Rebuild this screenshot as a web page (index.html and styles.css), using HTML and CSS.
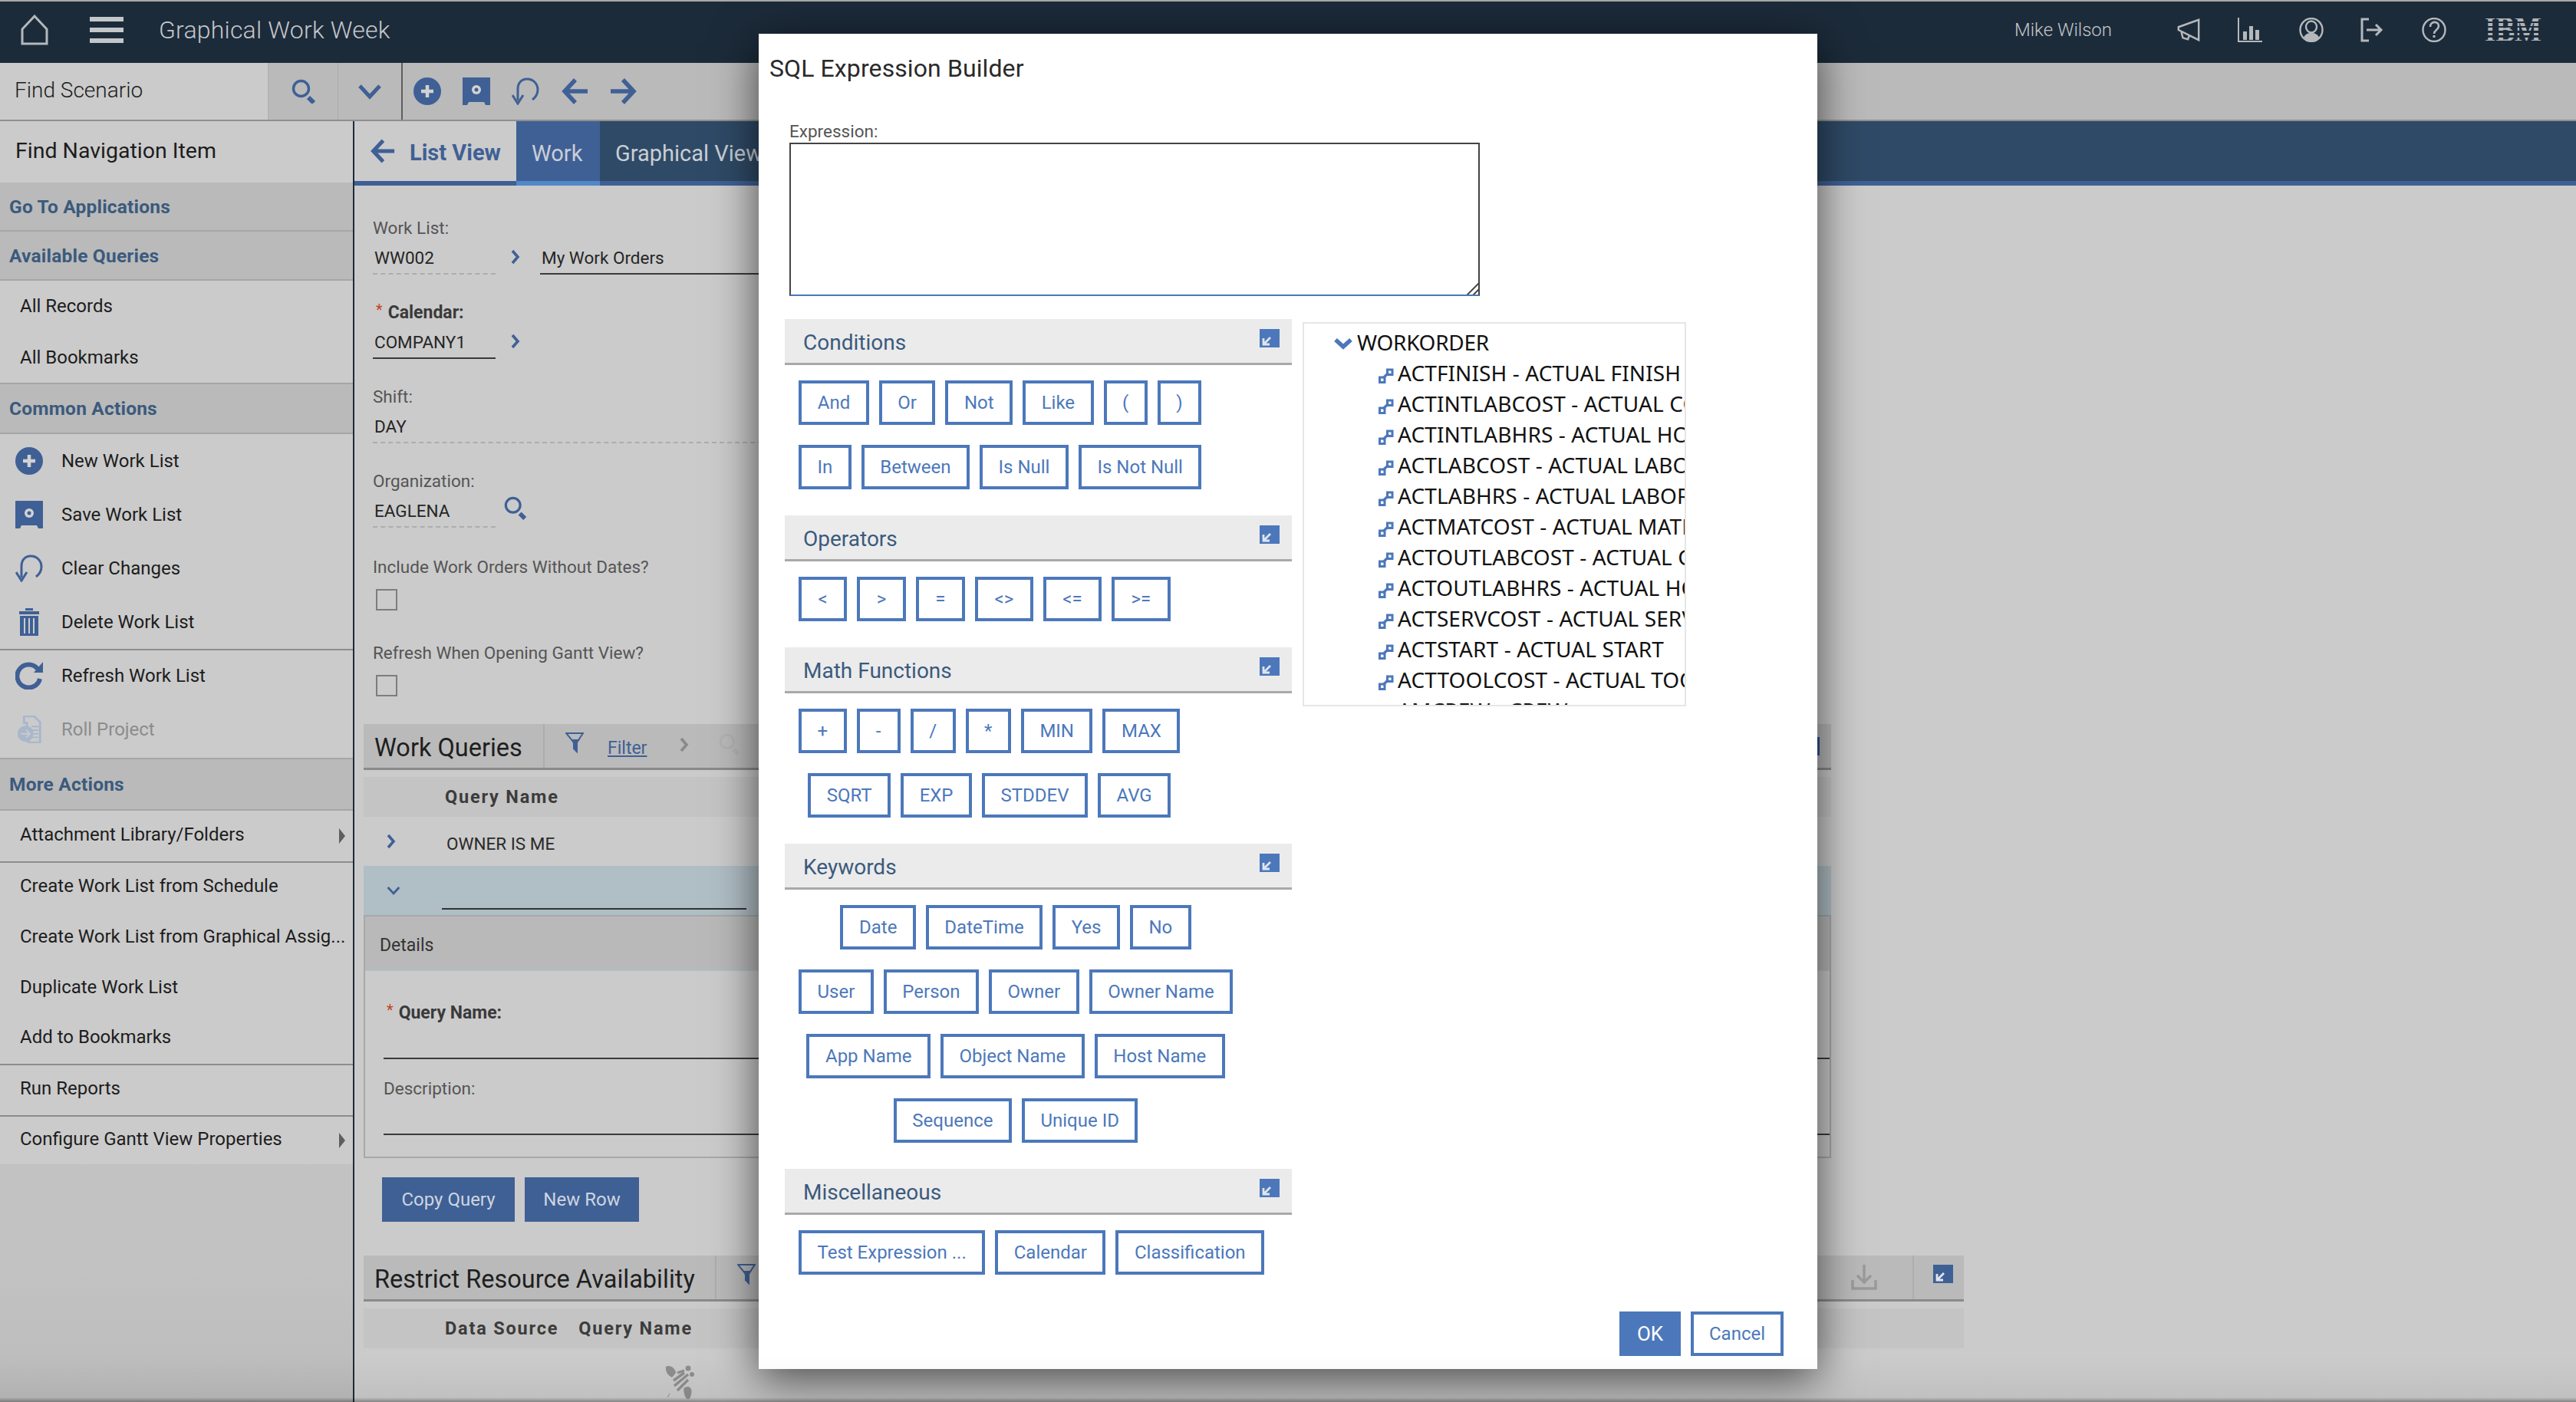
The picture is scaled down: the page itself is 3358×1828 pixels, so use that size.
FILE: index.html
```html
<!DOCTYPE html>
<html lang="en">
<head>
<meta charset="utf-8">
<title>SQL Expression Builder</title>
<link rel="stylesheet" href="styles.css">
</head>
<body>
<svg class="defs" width="0" height="0">
  <symbol id="i-search" viewBox="0 0 32 32"><circle cx="12.5" cy="12.5" r="10" fill="none" stroke="currentColor" stroke-width="3.4"/><path d="M22 24l7 7" stroke="currentColor" stroke-width="6" fill="none"/></symbol>
  <symbol id="i-down" viewBox="0 0 32 20"><path d="M3 3l13 14L29 3" fill="none" stroke="currentColor" stroke-width="5"/></symbol>
  <symbol id="i-treedown" viewBox="0 0 24 16"><path d="M2 3l10 9L22 3" fill="none" stroke="currentColor" stroke-width="5.5"/></symbol>
  <symbol id="i-right" viewBox="0 0 12 20"><path d="M2 2l7 8-7 8" fill="none" stroke="currentColor" stroke-width="3.6"/></symbol>
  <symbol id="i-plus" viewBox="0 0 36 36"><circle cx="18" cy="18" r="18" fill="currentColor"/><path d="M18 10v16M10 18h16" stroke="#d2d2d2" stroke-width="4.5"/></symbol>
  <symbol id="i-save" viewBox="0 0 36 36"><path d="M0 0h36v36h-6l-2-4H8l-2 4H0z" fill="currentColor"/><circle cx="18" cy="16" r="6" fill="#d2d2d2"/><circle cx="18" cy="16" r="2.5" fill="currentColor"/></symbol>
  <symbol id="i-undo" viewBox="0 0 36 36"><path d="M8 30V15C8 7 13 2 20 2c8 0 14 6 14 14 0 6-3 10-7 13" fill="none" stroke="currentColor" stroke-width="3"/><path d="M1 23l7 11 7-11" fill="none" stroke="currentColor" stroke-width="3"/></symbol>
  <symbol id="i-left" viewBox="0 0 36 36"><path d="M35 18H6M19 3L5 18l14 15" fill="none" stroke="currentColor" stroke-width="5.5"/></symbol>
  <symbol id="i-fwd" viewBox="0 0 36 36"><path d="M1 18h29M17 3l14 15-14 15" fill="none" stroke="currentColor" stroke-width="5.5"/></symbol>
  <symbol id="i-trash" viewBox="0 0 28 36"><path d="M9 0h10v3H9zM1 4h26v4H1zM2 10h24v26H2z" fill="currentColor"/><path d="M8 13v20M14 13v20M20 13v20" stroke="#cbcbcb" stroke-width="2"/></symbol>
  <symbol id="i-refresh" viewBox="0 0 36 36"><path d="M29 9A15 15 0 1 0 32 22" fill="none" stroke="currentColor" stroke-width="6"/><path d="M24 14h12V0z" fill="currentColor"/></symbol>
  <symbol id="i-doc" viewBox="0 0 34 38"><path d="M10 1h14l8 8v28H16v-2h-2V10h-4z" fill="none" stroke="currentColor" stroke-width="3"/><path d="M20 15h10M20 20h10M20 25h10M20 30h10" stroke="currentColor" stroke-width="2"/><circle cx="12" cy="25" r="11" fill="currentColor"/><path d="M6 25h11M13 20l5 5-5 5" fill="none" stroke="#cbcbcb" stroke-width="2"/></symbol>
  <symbol id="i-funnel" viewBox="0 0 24 26"><path d="M1 1h22L15 13v12l-4-4V13z" fill="none" stroke="currentColor" stroke-width="2"/><path d="M9 9h10l-4 5v11l-4-4z" fill="currentColor"/></symbol>
  <symbol id="i-collapse" viewBox="0 0 26 24"><path d="M0 0h26v24H0z" fill="currentColor"/><path d="M14 11l-8 8M5 12v8h8" fill="none" stroke="#dfe5ee" stroke-width="2.8"/></symbol>
  <symbol id="i-link" viewBox="0 0 20 20"><path d="M1.5 12h6.500v6.500H1.500zM11.500 2h6.500v6.500h-6.500z" fill="none" stroke="currentColor" stroke-width="3"/><path d="M6 13l7-7" stroke="currentColor" stroke-width="3.200"/></symbol>
  <symbol id="i-home" viewBox="0 0 38 40"><path d="M19 2L3 19v19h32V19z" fill="none" stroke="currentColor" stroke-width="3"/></symbol>
  <symbol id="i-mega" viewBox="0 0 32 34"><path d="M30 3v28L2 17 2 13z" fill="none" stroke="currentColor" stroke-width="2.6"/><path d="M6 20l2 8 7 2 2-5" fill="none" stroke="currentColor" stroke-width="2.6"/></symbol>
  <symbol id="i-chart" viewBox="0 0 32 32"><path d="M1 0v31h31" fill="none" stroke="currentColor" stroke-width="2"/><path d="M7 18h5v11H7zM15 11h5v18h-5zM23 16h5v13h-5z" fill="currentColor"/></symbol>
  <symbol id="i-user" viewBox="0 0 32 32"><ellipse cx="16" cy="16" rx="14.5" ry="15" fill="none" stroke="currentColor" stroke-width="2.4"/><ellipse cx="16" cy="12" rx="7" ry="7.5" fill="none" stroke="currentColor" stroke-width="2.4"/><path d="M6 26c2-5 6-6 10-6s8 1 10 6c-6 7-14 7-20 0z" fill="currentColor"/></symbol>
  <symbol id="i-logout" viewBox="0 0 32 32"><path d="M11 2H2v28h9" fill="none" stroke="currentColor" stroke-width="3"/><path d="M8 16h18M20 9l7 7-7 7" fill="none" stroke="currentColor" stroke-width="3"/></symbol>
  <symbol id="i-help" viewBox="0 0 32 32"><ellipse cx="16" cy="16" rx="14.5" ry="15" fill="none" stroke="currentColor" stroke-width="2.4"/><path d="M11 12c0-8 11-8 11-1 0 5-6 5-6 10" fill="none" stroke="currentColor" stroke-width="2.6"/><path d="M14.5 23h3v3h-3z" fill="currentColor"/></symbol>
  <symbol id="i-download" viewBox="0 0 34 34"><path d="M17 0v23M8 14l9 9 9-9M2 20v11h30V20" fill="none" stroke="currentColor" stroke-width="3.4"/></symbol>
  <symbol id="i-bee" viewBox="0 0 40 44"><path d="M2 2c6-3 12 2 13 8l-5 6C5 14 1 8 2 2z" fill="currentColor"/><circle cx="31" cy="4" r="3.5" fill="currentColor"/><circle cx="36" cy="12" r="3" fill="currentColor"/><path d="M17 10l9-3M12 20l14-10M13 27l18-15M17 33l14-14" stroke="currentColor" stroke-width="3.4" fill="none"/><path d="M26 30c5-3 9-1 9 4 0 5-2 10-4 10-3 0-6-8-5-14zM4 42l3-5" fill="currentColor" stroke="currentColor"/></symbol>
</svg>

<header class="topbar">
  <svg class="ic ic-home"><use href="#i-home"/></svg>
  <span class="burger"></span>
  <span class="app-title">Graphical Work Week</span>
  <span class="user-name">Mike Wilson</span>
  <svg class="ic top-ic"><use href="#i-mega"/></svg>
  <svg class="ic top-ic"><use href="#i-chart"/></svg>
  <svg class="ic top-ic"><use href="#i-user"/></svg>
  <svg class="ic top-ic"><use href="#i-logout"/></svg>
  <svg class="ic top-ic"><use href="#i-help"/></svg>
  <span class="ibm">IBM</span>
</header>

<div class="toolbar">
  <div class="find-scenario">Find Scenario</div>
  <div class="tool-cell cell-search"><svg class="ic ic-33"><use href="#i-search"/></svg></div>
  <div class="tool-cell cell-down"><svg class="ic ic-down"><use href="#i-down"/></svg></div>
  <div class="tool-icons">
    <svg class="ic ic-36"><use href="#i-plus"/></svg>
    <svg class="ic ic-36"><use href="#i-save"/></svg>
    <svg class="ic ic-36"><use href="#i-undo"/></svg>
    <svg class="ic ic-36"><use href="#i-left"/></svg>
    <svg class="ic ic-36"><use href="#i-fwd"/></svg>
  </div>
</div>

<div class="main">
  <nav class="sidebar">
    <div class="nav-find">Find Navigation Item</div>
    <div class="nav-head h64 no-top">Go To Applications</div>
    <div class="nav-head h64 no-top">Available Queries</div>
    <div class="nav-item h66">All Records</div>
    <div class="nav-item h67">All Bookmarks</div>
    <div class="nav-head h67">Common Actions</div>
    <div class="nav-item act"><svg class="ic ic-36"><use href="#i-plus"/></svg>New Work List</div>
    <div class="nav-item act"><svg class="ic ic-36"><use href="#i-save"/></svg>Save Work List</div>
    <div class="nav-item act"><svg class="ic ic-36"><use href="#i-undo"/></svg>Clear Changes</div>
    <div class="nav-item act rule"><svg class="ic ic-36"><use href="#i-trash"/></svg>Delete Work List</div>
    <div class="nav-item act h68 up"><svg class="ic ic-36"><use href="#i-refresh"/></svg>Refresh Work List</div>
    <div class="nav-item act off up"><svg class="ic ic-36"><use href="#i-doc"/></svg>Roll Project</div>
    <div class="nav-head h69">More Actions</div>
    <div class="nav-item h68 rule sub up">Attachment Library/Folders</div>
    <div class="nav-item h65 up">Create Work List from Schedule</div>
    <div class="nav-item h66 up">Create Work List from Graphical Assig...</div>
    <div class="nav-item h66 up">Duplicate Work List</div>
    <div class="nav-item h67 rule up">Add to Bookmarks</div>
    <div class="nav-item h67 rule up">Run Reports</div>
    <div class="nav-item h62 sub up">Configure Gantt View Properties</div>
  </nav>

  <section class="content">
    <div class="tabs">
      <div class="tab-back"><svg class="ic ic-back"><use href="#i-left"/></svg><span>List View</span></div>
      <div class="tab tab-on">Work</div>
      <div class="tab">Graphical View</div>
    </div>

    <div class="form">
      <div class="field">
        <div class="lbl">Work List:</div>
        <div class="val-row">
          <div class="val dashed">WW002</div>
          <svg class="ic ic-chev"><use href="#i-right"/></svg>
          <div class="val solid wide">My Work Orders</div>
        </div>
      </div>
      <div class="field">
        <div class="lbl req"><i>*</i>Calendar:</div>
        <div class="val-row">
          <div class="val solid">COMPANY1</div>
          <svg class="ic ic-chev"><use href="#i-right"/></svg>
        </div>
      </div>
      <div class="field">
        <div class="lbl">Shift:</div>
        <div class="val-row"><div class="val dashed full">DAY</div></div>
      </div>
      <div class="field f-org">
        <div class="lbl">Organization:</div>
        <div class="val-row">
          <div class="val dashed">EAGLENA</div>
          <svg class="ic ic-org"><use href="#i-search"/></svg>
        </div>
      </div>
      <div class="field f-check">
        <div class="lbl">Include Work Orders Without Dates?</div>
        <span class="check"></span>
      </div>
      <div class="field f-check">
        <div class="lbl">Refresh When Opening Gantt View?</div>
        <span class="check"></span>
      </div>
    </div>

    <div class="panel wq">
      <div class="panel-head">
        <div class="panel-title">Work Queries</div>
        <div class="panel-tools">
          <svg class="ic ic-funnel"><use href="#i-funnel"/></svg>
          <span class="filter-link">Filter</span>
          <svg class="ic ic-chev faded"><use href="#i-right"/></svg>
          <svg class="ic ic-search-faded"><use href="#i-search"/></svg>
          <svg class="ic ic-collapse"><use href="#i-collapse"/></svg>
        </div>
      </div>
      <div class="col-head"><span class="col c1">Query Name</span></div>
      <div class="row"><svg class="ic ic-chev r-chev"><use href="#i-right"/></svg><span class="cell">OWNER IS ME</span></div>
      <div class="row row-sel"><svg class="ic ic-sel"><use href="#i-down"/></svg><span class="sel-input"></span></div>
      <div class="details">
        <div class="details-head">Details</div>
        <div class="details-body">
          <div class="lbl req"><i>*</i>Query Name:</div>
          <div class="d-line"></div>
          <div class="lbl d-lbl">Description:</div>
          <div class="d-line d-line2"></div>
        </div>
      </div>
      <div class="actions">
        <button class="btn-solid">Copy Query</button>
        <button class="btn-solid">New Row</button>
      </div>
    </div>

    <div class="panel rr">
      <div class="panel-head">
        <div class="panel-title rr-title">Restrict Resource Availability</div>
        <div class="panel-tools rr-tools">
          <svg class="ic ic-funnel"><use href="#i-funnel"/></svg>
          <svg class="ic ic-download"><use href="#i-download"/></svg>
          <span class="rr-last"><svg class="ic ic-collapse2"><use href="#i-collapse"/></svg></span>
        </div>
      </div>
      <div class="col-head"><span class="col c1">Data Source</span><span class="col c2">Query Name</span></div>
      <svg class="ic ic-bee"><use href="#i-bee"/></svg>
    </div>
  </section>
</div>

<div class="modal">
  <h1 class="m-title">SQL Expression Builder</h1>
  <label class="m-label">Expression:</label>
  <textarea class="m-text"></textarea>
  <div class="m-body">
    <div class="m-left">
      <div class="g-head">Conditions<svg class="ic g-ic"><use href="#i-collapse"/></svg></div>
      <div class="g-btns">
        <div class="g-row"><button class="b">And</button><button class="b">Or</button><button class="b">Not</button><button class="b">Like</button><button class="b b-s">(</button><button class="b b-s">)</button></div>
        <div class="g-row"><button class="b">In</button><button class="b">Between</button><button class="b">Is Null</button><button class="b">Is Not Null</button></div>
      </div>
      <div class="g-head">Operators<svg class="ic g-ic"><use href="#i-collapse"/></svg></div>
      <div class="g-btns">
        <div class="g-row"><button class="b b-op">&lt;</button><button class="b b-op">&gt;</button><button class="b b-op">=</button><button class="b b-op">&lt;&gt;</button><button class="b b-op">&lt;=</button><button class="b b-op">&gt;=</button></div>
      </div>
      <div class="g-head">Math Functions<svg class="ic g-ic"><use href="#i-collapse"/></svg></div>
      <div class="g-btns">
        <div class="g-row"><button class="b">+</button><button class="b">-</button><button class="b">/</button><button class="b">*</button><button class="b">MIN</button><button class="b">MAX</button></div>
        <div class="g-row"><button class="b">SQRT</button><button class="b">EXP</button><button class="b">STDDEV</button><button class="b">AVG</button></div>
      </div>
      <div class="g-head">Keywords<svg class="ic g-ic"><use href="#i-collapse"/></svg></div>
      <div class="g-btns">
        <div class="g-row"><button class="b">Date</button><button class="b">DateTime</button><button class="b">Yes</button><button class="b">No</button></div>
        <div class="g-row"><button class="b">User</button><button class="b">Person</button><button class="b">Owner</button><button class="b">Owner Name</button></div>
        <div class="g-row"><button class="b">App Name</button><button class="b">Object Name</button><button class="b">Host Name</button></div>
        <div class="g-row"><button class="b">Sequence</button><button class="b">Unique ID</button></div>
      </div>
      <div class="g-head">Miscellaneous<svg class="ic g-ic"><use href="#i-collapse"/></svg></div>
      <div class="g-btns">
        <div class="g-row"><button class="b">Test Expression ...</button><button class="b">Calendar</button><button class="b">Classification</button></div>
      </div>
    </div>
    <div class="tree">
      <div class="t-root"><svg class="ic t-chev"><use href="#i-treedown"/></svg>WORKORDER</div>
      <div class="t-item"><svg class="ic t-link"><use href="#i-link"/></svg>ACTFINISH - ACTUAL FINISH</div>
      <div class="t-item"><svg class="ic t-link"><use href="#i-link"/></svg>ACTINTLABCOST - ACTUAL COST</div>
      <div class="t-item"><svg class="ic t-link"><use href="#i-link"/></svg>ACTINTLABHRS - ACTUAL HOURS</div>
      <div class="t-item"><svg class="ic t-link"><use href="#i-link"/></svg>ACTLABCOST - ACTUAL LABOR COST</div>
      <div class="t-item"><svg class="ic t-link"><use href="#i-link"/></svg>ACTLABHRS - ACTUAL LABOR HOURS</div>
      <div class="t-item"><svg class="ic t-link"><use href="#i-link"/></svg>ACTMATCOST - ACTUAL MATERIAL</div>
      <div class="t-item"><svg class="ic t-link"><use href="#i-link"/></svg>ACTOUTLABCOST - ACTUAL COST</div>
      <div class="t-item"><svg class="ic t-link"><use href="#i-link"/></svg>ACTOUTLABHRS - ACTUAL HOURS</div>
      <div class="t-item"><svg class="ic t-link"><use href="#i-link"/></svg>ACTSERVCOST - ACTUAL SERVICE</div>
      <div class="t-item"><svg class="ic t-link"><use href="#i-link"/></svg>ACTSTART - ACTUAL START</div>
      <div class="t-item"><svg class="ic t-link"><use href="#i-link"/></svg>ACTTOOLCOST - ACTUAL TOOL</div>
      <div class="t-item t-plain">AMCREW - CREW</div>
    </div>
  </div>
  <div class="m-foot">
    <button class="b-ok">OK</button>
    <button class="b b-cancel">Cancel</button>
  </div>
</div>
<div class="vignette"></div>
</body>
</html>
```
FILE: styles.css
```css
* { box-sizing: border-box; }
html, body { margin: 0; padding: 0; }
body {
  width: 3358px; height: 1828px; overflow: hidden; position: relative;
  background: #cbcbcb; color: #262626;
  font-family: Roboto, "Liberation Sans", sans-serif; font-size: 24px;
}
.defs { position: absolute; }
.ic { display: block; flex: none; color: #3f6095; }

.topbar {
  height: 82px; background: #1c2b3a; border-top: 2px solid #a9a9a9; padding-bottom: 6px;
  display: flex; align-items: center; color: #c4c7ca;
}
.topbar .ic { color: #b4b8bc; }
.ic-home { width: 38px; height: 40px; margin-left: 26px; }
.burger {
  width: 44px; height: 34px; margin-left: 53px;
  border-top: 6px solid #c4c7ca; border-bottom: 6px solid #c4c7ca; position: relative;
}
.burger::after { content: ""; position: absolute; left: 0; right: 0; top: 8px; height: 6px; background: #c4c7ca; }
.app-title { margin-left: 46px; font-size: 32px; font-weight: 300; letter-spacing: .2px; }
.user-name { margin-left: auto; font-size: 24px; font-weight: 300; }
.top-ic { width: 32px; height: 32px; margin-left: 48px; }
.user-name + .top-ic { margin-left: 84px; }
.ibm {
  position: relative; margin: 0 45px 0 50px; font: 700 37px/34px "Liberation Serif", serif;
  color: #b0b4b8; transform: scaleY(1.25);
}
.ibm::after {
  content: ""; position: absolute; inset: 0;
  background: repeating-linear-gradient(#0000 0 3px, #1c2b3a 3px 5px);
}

.toolbar {
  height: 76px; display: flex; background: #bababa; border-bottom: 2px solid #8f8f8f;
}
.find-scenario {
  width: 351px; background: #cbcbcb; border-right: 2px solid #b4b4b4;
  padding-left: 19px; font-size: 28px; line-height: 72px; font-weight: 300; color: #1d1d1d;
}
.tool-cell { display: flex; align-items: center; justify-content: center; height: 74px; }
.cell-search { width: 90px; border-right: 1px solid #acacac; }
.cell-down { width: 84px; border-right: 2px solid #5e5e5e; }
.ic-33 { width: 34px; height: 32px; }
.ic-down { width: 32px; height: 22px; }
.ic-36 { width: 36px; height: 36px; }
.tool-icons { display: flex; gap: 28px; align-items: center; padding-left: 14px; }

.main { display: flex; height: 1670px; }
.sidebar {
  width: 462px; flex: none; border-right: 2px solid #1f2b38;
  background: linear-gradient(#c4c4c4, #c2c2c2 90%, #bbb);
}
.nav-find { height: 80px; background: #cbcbcb; padding-left: 20px; font-size: 28.500px; line-height: 78px; font-weight: 400; color: #1d1d1d; }
.nav-head {
  display: flex; align-items: center; padding-left: 12px;
  background: #bababa; color: #3b5a7d; font-weight: 700; font-size: 24.500px; letter-spacing: .2px;
  border-top: 2px solid #a6a6a6; border-bottom: 2px solid #a6a6a6;
}
.no-top { border-top: 0; }
.h64 { height: 64px; } .h65 { height: 65px; } .h66 { height: 66px; } .h67 { height: 67px; }
.h68 { height: 68px; } .h69 { height: 69px; } .h62 { height: 62px; }
.nav-item {
  display: flex; align-items: center; background: #cbcbcb; padding-left: 26px;
  color: #1d1d1d; font-size: 24px;
}
.act { height: 70px; padding-left: 20px; gap: 24px; }
.rule { border-bottom: 2px solid #8d8d8d; }
.act.rule { height: 72px; }
.nav-item.up { padding-bottom: 5px; }
.off { color: #8c8c8c; }
.off .ic { color: #a9b7cb; }
.sub { position: relative; }
.sub::after {
  content: ""; position: absolute; right: 10px; top: 50%; margin-top: -10px;
  border-left: 8px solid #5e5e5e; border-top: 10px solid transparent; border-bottom: 10px solid transparent;
}

.content { flex: 1; min-width: 0; }
.tabs { height: 84px; display: flex; background: #2f4a66; border-bottom: 6px solid #3f6095; }
.tab-back { width: 211px; background: #cbcbcb; display: flex; align-items: center; padding: 3px 0 0 20px; gap: 19px; color: #3f6095; font-weight: 700; font-size: 29px; }
.ic-back { width: 33px; height: 50px; margin-top: -4px; }
.tab { padding: 0 20px; color: #c8ced6; font-size: 29px; line-height: 84px; }
.tab-on { background: #3f6095; width: 109px; position: relative; }
.tab-on::after { content: ""; position: absolute; left: 0; right: 0; bottom: -6px; height: 6px; background: #5088c8; }

.form { padding: 36px 0 0 24px; }
.field { height: 110px; }
.lbl { height: 36px; line-height: 39px; font-size: 22.500px; color: #555; }
.lbl.req { color: #3a3a3a; font-weight: 700; font-size: 23px; }
.req i { color: #c4431b; font-style: normal; font-weight: 400; margin: 0 7px 0 4px; position: relative; top: -4px; font-size: 20px; }
.val-row { display: flex; align-items: flex-start; height: 44px; }
.val { width: 160px; height: 44px; line-height: 44px; font-size: 22.500px; color: #262626; padding-left: 2px; border-bottom: 2px solid #333; }
.dashed { border-bottom: 2px dashed #adadad; }
.solid { border-bottom: 2px solid #3a3a3a; }
.wide { width: 700px; margin-left: 26px; }
.full { width: 900px; }
.ic-chev { width: 12px; height: 20px; margin: 11px 0 0 20px; }
.ic-org { width: 30px; height: 32px; margin: 2px 0 0 11px; }
.f-org { height: 112px; }
.f-check { height: 112px; padding-top: 0; }
.check { display: block; width: 28px; height: 28px; margin: 12px 0 0 4px; border: 2px solid #7d7d7d; }

.panel { margin-left: 12px; }
.wq { width: 1913px; }
.panel-head { height: 60px; display: flex; background: #bababa; border-bottom: 3px solid #8a8a8a; }
.panel-title { padding: 0 14px; width: 236px; font-size: 32.500px; line-height: 62px; color: #1f1f1f; border-right: 2px solid #adadad; white-space: nowrap; }
.panel-tools { flex: 1; display: flex; align-items: center; position: relative; }
.ic-funnel { width: 24px; height: 36px; margin: -10px 0 0 27px; }
.filter-link { margin: 6px 0 0 31px; color: #3f6095; text-decoration: underline; font-size: 23px; }
.faded { color: #8a8a8a; margin-top: -4px; margin-left: 43px; }
.ic-search-faded { width: 28px; height: 30px; margin: -6px 0 0 39px; color: #b2b2b2; }
.ic-collapse { width: 26px; height: 24px; margin-left: auto; margin-right: 15px; color: #2f5595; }
.col-head { margin-top: 9px; height: 52px; background: #c4c4c4; display: flex; align-items: center; color: #3c3c3c; font-weight: 700; font-size: 23.500px; letter-spacing: 1.800px; padding-left: 106px; }
.c2 { margin-left: 26px; }
.row { height: 64px; display: flex; align-items: center; padding-left: 30px; }
.r-chev { margin: 0; }
.cell { margin: 6px 0 0 66px; font-size: 22.500px; color: #2a2a2a; }
.row-sel { background: #b0bec5; position: relative; }
.ic-sel { width: 18px; height: 12px; margin-left: 0; }
.sel-input { width: 397px; height: 2px; margin: 48px 0 0 54px; background: #333; }
.details { height: 317px; border: 2px solid #a8a8a8; border-top-width: 2px; }
.details-head { height: 71px; background: #b9b9b9; border-bottom: 2px solid #b0bec5; padding-left: 19px; font-size: 23px; line-height: 76px; color: #333; }
.details-body { padding: 35px 0 0 24px; }
.d-line { height: 2px; background: #3a3a3a; margin: 42px 0 0 0; }
.d-lbl { margin-top: 19px; }
.d-line2 { margin-top: 42px; }
.actions { display: flex; gap: 13px; padding: 25px 0 0 24px; }
.btn-solid { height: 58px; padding: 0; border: 0; background: #3f6095; color: #cdd5e0; font: 400 24px Roboto, sans-serif; }
.btn-solid:first-child { width: 173px; }
.btn-solid:last-child { width: 149px; }
.rr { width: 2086px; margin-top: 44px; }
.rr-title { width: 460px; }
.ic-funnel + .ic-download { margin-left: auto; width: 34px; height: 34px; color: #9a9a9a; }
.rr-last { height: 57px; margin-left: 46px; width: 67px; border-left: 2px solid #adadad; display: flex; align-items: center; }
.ic-collapse2 { width: 26px; height: 26px; margin: -10px 0 0 25px; color: #3f6095; }
.ic-bee { width: 40px; height: 44px; margin: 22px 0 0 392px; color: #8e8e8e; }

.modal {
  position: absolute; left: 989px; top: 44px; width: 1380px; height: 1741px;
  background: #fff; box-shadow: 0 12px 55px rgba(0,0,0,.65); z-index: 2;
}
.m-title { margin: 25px 0 0 14px; font-size: 32px; letter-spacing: .1px; line-height: 40px; font-weight: 400; color: #2a2a2a; }
.m-label { display: block; margin: 46px 0 0 40px; height: 31px; line-height: 33px; font-size: 22.500px; color: #555; }
.m-text {
  display: block; width: 900px; height: 200px; margin-left: 40px; padding: 0;
  border: 2px solid #444; border-bottom-color: #4c78bb; border-radius: 0; outline: 0; resize: none;
  background: linear-gradient(-45deg, #fff 0 3px, #555 3px 5px, #fff 5px 9px, #555 9px 11px, #fff 11px) no-repeat right bottom / 16px 16px, #fff;
}
.m-body { display: flex; align-items: flex-start; margin: 30px 0 0 34px; }
.m-left { width: 661px; flex: none; }
.g-head {
  height: 60px; background: #ebebeb; border-bottom: 3px solid #a9a9a9; padding-left: 24px;
  color: #3b5a7d; font-size: 28px; line-height: 62px; position: relative;
}
.g-ic { position: absolute; right: 16px; top: 13px; width: 26px; height: 24px; color: #4c78bb; }
.g-btns { display: flex; width: max-content; flex-direction: column; align-items: center; gap: 26px; margin: 20px 0 34px 18px; }
.m-left > .g-btns:last-child { margin-bottom: 0; }
.g-row { display: flex; gap: 13px; }
.b {
  height: 58px; min-width: 57px; padding: 0 20.500px; background: #fff; border: 4px solid #4c78bb;
  color: #4c78bb; font: 400 24px Roboto, sans-serif; white-space: nowrap;
}
.b-op { padding: 0 21.500px; }
.tree {
  width: 500px; height: 501px; margin: 4px 0 0 14px; border: 2px solid #e6e6e6; overflow: hidden;
  font-family: "Noto Sans", sans-serif; font-size: 28px; color: #111; white-space: nowrap;
}
.t-root { display: flex; align-items: center; height: 40px; margin-top: 4px; padding-left: 39px; letter-spacing: -.3px; }
.t-chev { width: 24px; height: 16px; margin: 4px 6px 0 0; color: #4c78bb; }
.t-item { display: flex; align-items: center; height: 40px; padding-left: 97px; letter-spacing: .1px; }
.t-plain { padding-left: 122px; }
.t-link { width: 20px; height: 20px; margin: 8px 5px 0 0; color: #4c78bb; }
.m-foot { position: absolute; right: 44px; bottom: 17px; display: flex; gap: 13px; }
.b-ok { width: 80px; height: 58px; border: 0; background: #4c78bb; color: #fff; font: 400 26px Roboto, sans-serif; }
.b-cancel { width: 121px; padding: 0; }
.vignette {
  position: absolute; inset: auto 0 0 0; height: 60px; z-index: 3; pointer-events: none;
  background: linear-gradient(transparent, rgba(0,0,0,.05) 90%, rgba(0,0,0,.35));
}
```
